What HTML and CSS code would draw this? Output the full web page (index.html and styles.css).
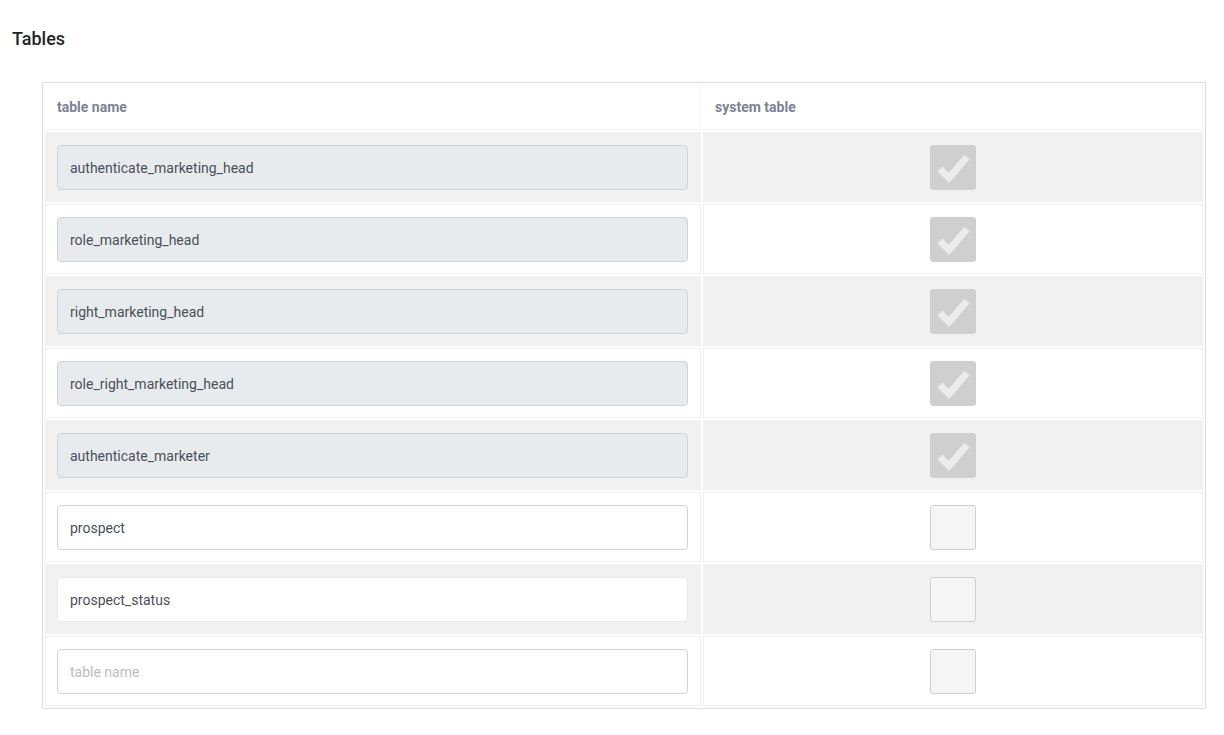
FILE: index.html
```html
<!DOCTYPE html>
<html>
<head>
<meta charset="utf-8">
<link rel="stylesheet" href="styles.css">
</head>
<body>
<div class="page">
  <h2 class="title">Tables</h2>
  <div class="wrap">
    <table class="tbl">
      <thead>
        <tr><th class="c-name">table name</th><th class="c-sys">system table</th></tr>
      </thead>
      <tbody>
        <tr class="odd"><td><input class="inp" type="text" value="authenticate_marketing_head" disabled></td><td class="ck-cell"><span class="ck on"><svg viewBox="0 0 46 46" width="46" height="46"><polyline points="10,24 19,33 37,12" fill="none" stroke="#ececec" stroke-width="7"/></svg></span></td></tr>
        <tr><td><input class="inp" type="text" value="role_marketing_head" disabled></td><td class="ck-cell"><span class="ck on"><svg viewBox="0 0 46 46" width="46" height="46"><polyline points="10,24 19,33 37,12" fill="none" stroke="#ececec" stroke-width="7"/></svg></span></td></tr>
        <tr class="odd"><td><input class="inp" type="text" value="right_marketing_head" disabled></td><td class="ck-cell"><span class="ck on"><svg viewBox="0 0 46 46" width="46" height="46"><polyline points="10,24 19,33 37,12" fill="none" stroke="#ececec" stroke-width="7"/></svg></span></td></tr>
        <tr><td><input class="inp" type="text" value="role_right_marketing_head" disabled></td><td class="ck-cell"><span class="ck on"><svg viewBox="0 0 46 46" width="46" height="46"><polyline points="10,24 19,33 37,12" fill="none" stroke="#ececec" stroke-width="7"/></svg></span></td></tr>
        <tr class="odd"><td><input class="inp" type="text" value="authenticate_marketer" disabled></td><td class="ck-cell"><span class="ck on"><svg viewBox="0 0 46 46" width="46" height="46"><polyline points="10,24 19,33 37,12" fill="none" stroke="#ececec" stroke-width="7"/></svg></span></td></tr>
        <tr><td><input class="inp" type="text" value="prospect"></td><td class="ck-cell"><span class="ck"></span></td></tr>
        <tr class="odd"><td><input class="inp light" type="text" value="prospect_status"></td><td class="ck-cell"><span class="ck"></span></td></tr>
        <tr><td><input class="inp" type="text" placeholder="table name"></td><td class="ck-cell"><span class="ck"></span></td></tr>
      </tbody>
    </table>
  </div>
</div>
</body>
</html>
```

FILE: styles.css
```css
html, body {
  margin: 0;
  padding: 0;
  background: #ffffff;
  font-family: Roboto, "Liberation Sans", Arial, sans-serif;
}
.page {
  padding: 29px 12px 0 12px;
}
.title {
  margin: 0;
  font-size: 18px;
  font-weight: 500;
  color: #212529;
  line-height: 20px;
}
.wrap {
  padding: 33px 6px 0 30px;
}
.tbl {
  width: 100%;
  border: 1px solid #dcdde3;
  border-collapse: separate;
  border-spacing: 2px;
}
.tbl th {
  text-align: left;
  font-size: 14px;
  font-weight: 700;
  color: #7b8392;
  padding: 14px 12px 14px 12px;
  border: 1px solid #f3f3f3;
  border-top: none;
  border-left: none;
  line-height: 16px;
}
.c-name { width: 656px; box-sizing: border-box; }
.tbl td {
  border: 1px solid #f1f1f1;
  padding: 12px 12px 11px 11px;
}
.tbl tr.odd td {
  background: #f1f1f1;
}
.inp {
  display: block;
  box-sizing: border-box;
  width: 100%;
  height: 45px;
  margin: 0;
  padding: 0 12px;
  border: 1px solid #ced4da;
  border-radius: 4px;
  background: #ffffff;
  font-family: Roboto, "Liberation Sans", Arial, sans-serif;
  font-size: 14px;
  color: #495057;
  outline: none;
}
.inp:disabled {
  background: #e8ebee;
  color: #495057;
  -webkit-text-fill-color: #495057;
  opacity: 1;
}
.inp.light {
  border-color: #e8e8f2;
}
.inp::placeholder {
  color: #bdbdbd;
}
.ck-cell {
  text-align: center;
}
.ck {
  display: inline-block;
  vertical-align: middle;
  box-sizing: border-box;
  width: 46px;
  height: 45px;
  border: 1px solid #cfcfcf;
  border-radius: 3px;
  background: #f5f5f5;
}
.ck.on {
  background: #cfcfcf;
  border-color: #cfcfcf;
  overflow: hidden;
}
.ck svg {
  display: block;
  margin: -1px;
}
```
